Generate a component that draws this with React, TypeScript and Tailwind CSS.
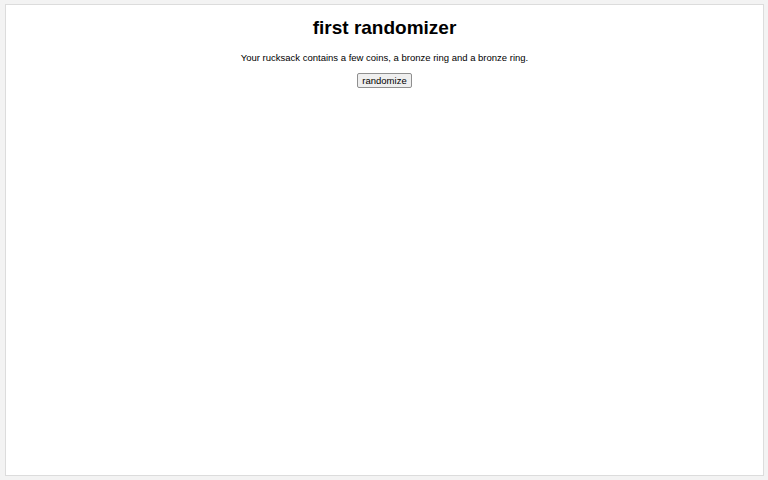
import { useState } from 'react';

const items = ['a few coins', 'a bronze ring', 'a silver ring', 'a rusty key', 'a bronze ring'];

export default function App() {
  const [picks, setPicks] = useState<string[]>(['a few coins', 'a bronze ring', 'a bronze ring']);

  const randomize = () => {
    setPicks([0, 1, 2].map(() => items[Math.floor(Math.random() * items.length)]));
  };

  return (
    <div className="h-[480px] w-[768px] bg-[#f3f3f3] pb-[4px] pl-[5px] pr-[4px] pt-[4px] font-['Liberation_Sans',Arial,sans-serif] text-black">
      <div className="flex h-full flex-col items-center border border-[#dcdcdc] bg-white">
        <h1 className="mt-[12px] text-[19px] font-bold leading-[22px]">first randomizer</h1>

        <p className="mt-[13px] text-[9.5px] leading-[12px]">
          Your rucksack contains {picks[0]}, {picks[1]} and {picks[2]}.
        </p>

        <button
          onClick={randomize}
          className="mt-[9px] h-[15px] rounded-[2px] border border-[#8f8f8f] bg-[#efefef] px-[4px] text-[9.5px] leading-[12px]"
        >
          randomize
        </button>
      </div>
    </div>
  );
}
